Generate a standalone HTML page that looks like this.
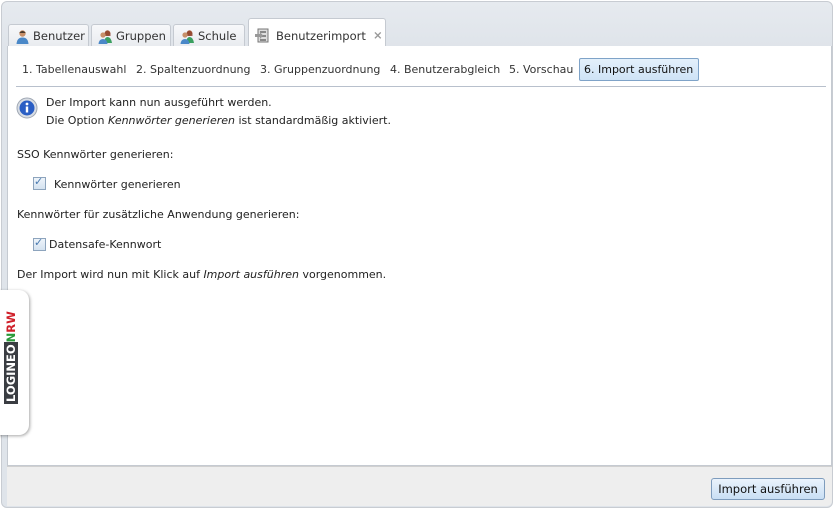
<!DOCTYPE html>
<html><head><meta charset="utf-8"><style>
*{box-sizing:border-box;margin:0;padding:0}
body{width:834px;height:509px;background:#fff;font-family:"DejaVu Sans","Liberation Sans",sans-serif;font-size:11px;color:#222;position:relative;overflow:hidden}
.outer{position:absolute;left:1px;top:1px;width:832px;height:507px;border:1px solid #c8ccd2;border-radius:6px;background:linear-gradient(#e6eaef,#dfe4ea 46px);}
.tab{position:absolute;top:24px;height:23px;border:1px solid #c5cad1;border-bottom:none;background:linear-gradient(#f7f8fa,#e8ebef);border-radius:3px 3px 0 0;padding:4px 0 0 24px;color:#333;font-size:11.5px}
.tab.act{top:18px;height:29px;background:#fff;padding-top:10px;}
.ico{position:absolute;left:6px;top:4px;width:15px;height:15px}
.tab.act .ico{top:9px}
.content{position:absolute;left:7px;top:46px;width:825px;height:420px;background:#fff;border:1px solid #c5cad1;border-top:none}
.footer{position:absolute;left:7px;top:466px;width:825px;height:40px;background:#eeeeee;border-top:1px solid #d0d0d0;border-radius:0 0 5px 0}
.t{position:absolute;white-space:nowrap}
.cb{position:absolute;width:13px;height:13px;border:1px solid #8da4bd;background:linear-gradient(#eef4fa,#d4e2f0)}
.btn{position:absolute;left:711px;top:478px;width:114px;height:22px;border:1px solid #7e9cbd;border-radius:3px;background:linear-gradient(#eaf3fc,#c9dff4);text-align:center;line-height:20px;font-size:11.5px;color:#111}
.logo{position:absolute;left:4px;top:312px;width:15px;height:92px;writing-mode:vertical-rl;transform:rotate(180deg);font-weight:bold;font-size:11.5px;line-height:15px;white-space:nowrap}
</style></head><body>
<div class="outer"></div>
<div class="tab" style="left:8px;width:81px"><svg class="ico" viewBox="0 0 15 15"><circle cx="7.5" cy="4.5" r="3.2" fill="#c8906a"/><path d="M4.3 4 Q7.5 0 10.7 4" fill="#4a3a2c"/><path d="M1.5 15 Q2 8.5 7.5 8.5 Q13 8.5 13.5 15Z" fill="#4a88c8"/></svg>Benutzer</div>
<div class="tab" style="left:91px;width:80px"><svg class="ico" viewBox="0 0 15 15"><circle cx="9.5" cy="4" r="2.8" fill="#c8906a"/><path d="M6.5 4 Q9.5 -1 12.5 4 L12.5 7 L6.5 7Z" fill="#8a3a24" opacity=".8"/><path d="M6 14 Q6.5 8 9.5 8 Q13 8 14 14Z" fill="#3aa060"/><circle cx="5" cy="6" r="2.6" fill="#c8906a"/><path d="M0.5 15 Q1 10 5 10 Q9 10 9.5 15Z" fill="#4a88c8"/></svg>Gruppen</div>
<div class="tab" style="left:173px;width:72px"><svg class="ico" viewBox="0 0 15 15"><circle cx="9.5" cy="4" r="2.8" fill="#c8906a"/><path d="M6.5 4 Q9.5 -1 12.5 4 L12.5 7 L6.5 7Z" fill="#8a3a24" opacity=".8"/><path d="M6 14 Q6.5 8 9.5 8 Q13 8 14 14Z" fill="#3aa060"/><circle cx="5" cy="6" r="2.6" fill="#c8906a"/><path d="M0.5 15 Q1 10 5 10 Q9 10 9.5 15Z" fill="#4a88c8"/></svg>Schule</div>
<div class="tab act" style="left:248px;width:138px;padding-left:27px"><svg class="ico" viewBox="0 0 15 15"><rect x="3" y="1" width="10" height="13" fill="#ddd" stroke="#777"/><rect x="5" y="3" width="6" height="2" fill="#888"/><rect x="5" y="7" width="6" height="2" fill="#888"/><rect x="5" y="11" width="6" height="2" fill="#888"/><path d="M0 6h5v-2l3 3.5-3 3.5v-2H0z" fill="#999"/></svg>Benutzerimport<span style="position:absolute;left:124px;top:9px;color:#999;font-weight:bold">×</span></div>
<div class="content"></div>
<div class="t" style="left:22px;top:63px;color:#333">1. Tabellenauswahl</div>
<div class="t" style="left:136px;top:63px;color:#333">2. Spaltenzuordnung</div>
<div class="t" style="left:260px;top:63px;color:#333">3. Gruppenzuordnung</div>
<div class="t" style="left:390px;top:63px;color:#333">4. Benutzerabgleich</div>
<div class="t" style="left:509px;top:63px;color:#333">5. Vorschau</div>
<div style="position:absolute;left:579px;top:58px;width:120px;height:23px;border:1px solid #7fa3c8;border-radius:2px;background:linear-gradient(#e4f0fb,#cfe3f6)"></div>
<div class="t" style="left:584px;top:63px;color:#111">6. Import ausführen</div>
<div style="position:absolute;left:16px;top:86px;width:810px;height:1px;background:#b8c0cc"></div>
<svg style="position:absolute;left:16px;top:97px" width="22" height="22" viewBox="0 0 22 22"><circle cx="11" cy="11" r="10" fill="#d8dde4" stroke="#a0a8b4"/><circle cx="11" cy="11" r="7.5" fill="#2a5ec4"/><circle cx="11" cy="7" r="1.4" fill="#fff"/><rect x="9.8" y="9.5" width="2.4" height="6" fill="#fff"/></svg>
<div class="t" style="left:46px;top:96px">Der Import kann nun ausgeführt werden.</div>
<div class="t" style="left:46px;top:114px">Die Option <i>Kennwörter generieren</i> ist standardmäßig aktiviert.</div>
<div class="t" style="left:17px;top:148px">SSO Kennwörter generieren:</div>
<div class="cb" style="left:33px;top:177px"></div><span class="t" style="left:34px;top:175px;color:#4a7ab0;font-size:11px">✓</span>
<div class="t" style="left:54px;top:178px">Kennwörter generieren</div>
<div class="t" style="left:17px;top:208px">Kennwörter für zusätzliche Anwendung generieren:</div>
<div class="cb" style="left:33px;top:238px"></div><span class="t" style="left:34px;top:236px;color:#4a7ab0;font-size:11px">✓</span>
<div class="t" style="left:49px;top:238px">Datensafe-Kennwort</div>
<div class="t" style="left:17px;top:268px">Der Import wird nun mit Klick auf <i>Import ausführen</i> vorgenommen.</div>
<div style="position:absolute;left:-10px;top:290px;width:39px;height:145px;background:#fff;border-radius:10px;box-shadow:1px 1px 3px rgba(0,0,0,.35)"></div>
<div class="logo"><span style="background:#3a3d42;color:#fff;padding:2px 0">LOGINEO</span><span style="color:#2a9a3a">N</span><span style="color:#d0202a">RW</span></div>
<div class="footer"></div>
<div class="btn">Import ausführen</div>
</body></html>
